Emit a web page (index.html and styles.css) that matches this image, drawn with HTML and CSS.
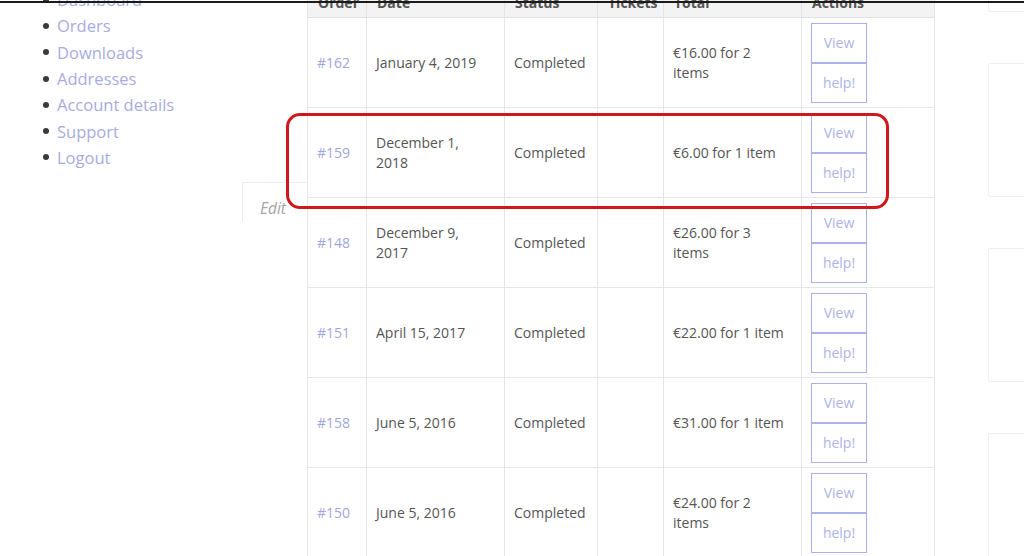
FILE: index.html
```html
<!DOCTYPE html>
<html lang="en">
<head>
<meta charset="utf-8">
<title>My account – Orders</title>
<link rel="stylesheet" href="styles.css">
</head>
<body>
<div class="top-line"></div>
<div class="page">
  <aside class="sidebar">
    <ul class="account-nav">
      <li><a href="#">Dashboard</a></li>
      <li><a href="#">Orders</a></li>
      <li><a href="#">Downloads</a></li>
      <li><a href="#">Addresses</a></li>
      <li><a href="#">Account details</a></li>
      <li><a href="#">Support</a></li>
      <li><a href="#">Logout</a></li>
    </ul>
    <div class="edit-tab">Edit</div>
  </aside>

  <main class="orders">
    <table class="orders-table">
      <colgroup>
        <col class="c-order"><col class="c-date"><col class="c-status"><col class="c-tickets"><col class="c-total"><col class="c-actions">
      </colgroup>
      <thead>
        <tr><th>Order</th><th>Date</th><th>Status</th><th>Tickets</th><th>Total</th><th>Actions</th></tr>
      </thead>
      <tbody>
        <tr>
          <td><a class="order-no" href="#">#162</a></td>
          <td>January 4, 2019</td>
          <td>Completed</td>
          <td></td>
          <td>€16.00 for 2 items</td>
          <td class="actions"><a class="btn" href="#">View</a><a class="btn" href="#">help!</a></td>
        </tr>
        <tr>
          <td><a class="order-no" href="#">#159</a></td>
          <td>December 1, 2018</td>
          <td>Completed</td>
          <td></td>
          <td>€6.00 for 1 item</td>
          <td class="actions"><a class="btn" href="#">View</a><a class="btn" href="#">help!</a></td>
        </tr>
        <tr>
          <td><a class="order-no" href="#">#148</a></td>
          <td>December 9, 2017</td>
          <td>Completed</td>
          <td></td>
          <td>€26.00 for 3 items</td>
          <td class="actions"><a class="btn" href="#">View</a><a class="btn" href="#">help!</a></td>
        </tr>
        <tr>
          <td><a class="order-no" href="#">#151</a></td>
          <td>April 15, 2017</td>
          <td>Completed</td>
          <td></td>
          <td>€22.00 for 1 item</td>
          <td class="actions"><a class="btn" href="#">View</a><a class="btn" href="#">help!</a></td>
        </tr>
        <tr>
          <td><a class="order-no" href="#">#158</a></td>
          <td>June 5, 2016</td>
          <td>Completed</td>
          <td></td>
          <td>€31.00 for 1 item</td>
          <td class="actions"><a class="btn" href="#">View</a><a class="btn" href="#">help!</a></td>
        </tr>
        <tr>
          <td><a class="order-no" href="#">#150</a></td>
          <td>June 5, 2016</td>
          <td>Completed</td>
          <td></td>
          <td>€24.00 for 2 items</td>
          <td class="actions"><a class="btn" href="#">View</a><a class="btn" href="#">help!</a></td>
        </tr>
      </tbody>
    </table>
  </main>

  <div class="side-widgets">
    <div class="widget"></div>
    <div class="widget"></div>
    <div class="widget"></div>
    <div class="widget"></div>
  </div>
</div>
<div class="highlight"></div>
</body>
</html>
```

FILE: styles.css
```css
html, body {
  margin: 0;
  padding: 0;
  height: 556px;
  overflow: hidden;
  background: #fff;
}
body {
  font-family: "Open Sans", "Noto Sans", sans-serif;
  font-size: 14px;
  color: #555;
  position: relative;
}
a { text-decoration: none; }

.top-line {
  position: absolute;
  top: 1px;
  left: 0;
  right: 0;
  height: 2px;
  background: #1a1a1a;
  z-index: 5;
}

.page {
  display: flex;
  align-items: flex-start;
}

/* Sidebar */
.sidebar {
  width: 307px;
  flex-shrink: 0;
}
.account-nav {
  list-style: none;
  margin: -13.5px 0 0 0;
  padding: 0 0 0 43px;
}
.account-nav li {
  display: flex;
  align-items: center;
  height: 26.3px;
  font-size: 16.5px;
}
.account-nav li::before {
  content: "";
  width: 6px;
  height: 6px;
  border-radius: 50%;
  background: #3a3a3a;
  margin-right: 8px;
  flex-shrink: 0;
}
.account-nav a {
  color: #a7acdf;
}
.edit-tab {
  margin: 11px 0 0 242px;
  height: 40px;
  box-sizing: border-box;
  border-top: 1px solid #ececec;
  border-left: 1px solid #ececec;
  padding: 15px 4px 0 0;
  line-height: 20px;
  text-align: center;
  font-style: italic;
  font-size: 15.5px;
  color: #a3a3a3;
}

/* Orders table */
.orders {
  width: 627px;
  flex-shrink: 0;
  margin-top: -17px;
}
.orders-table {
  width: 627px;
  table-layout: fixed;
  border-collapse: collapse;
  border-left: 1px solid #d6d6d6;
  border-right: 1px solid #e2e2e2;
}
.c-order { width: 59px; }
.c-date { width: 138px; }
.c-status { width: 93px; }
.c-tickets { width: 66px; }
.c-total { width: 138px; }
.c-actions { width: 133px; }

.orders-table th {
  background: #f3f3f3;
  text-align: left;
  font-weight: 700;
  color: #555;
  line-height: 20px;
  padding: 10px 10px 4px;
  border: 1px solid #e4e4e4;
  border-top: 0;
  border-bottom: 1px solid #e0e0e0;
}
.orders-table td {
  height: 90px;
  box-sizing: border-box;
  padding: 0 12px 0 9px;
  line-height: 20px;
  vertical-align: middle;
  border: 1px solid #e6e6e6;
}
.order-no {
  color: #a0a6dc;
}
.orders-table td.actions {
  vertical-align: top;
  padding-top: 5px;
}
.btn {
  display: block;
  width: 56px;
  height: 40px;
  box-sizing: border-box;
  border: 1px solid #abb1ea;
  line-height: 38px;
  text-align: center;
  color: #aeb3e6;
  background: #fff;
}

/* Right widgets */
.side-widgets {
  margin: -122px 0 0 54px;
  display: flex;
  flex-direction: column;
  gap: 51px;
  flex-shrink: 0;
}
.widget {
  width: 60px;
  height: 134px;
  box-sizing: border-box;
  border: 1px solid #efefef;
  border-radius: 2px;
}

/* Annotation overlay */
.highlight {
  position: absolute;
  left: 286px;
  top: 113px;
  width: 603px;
  height: 96px;
  box-sizing: border-box;
  border: 3px solid #d0171b;
  border-radius: 14px;
  z-index: 4;
}
```
